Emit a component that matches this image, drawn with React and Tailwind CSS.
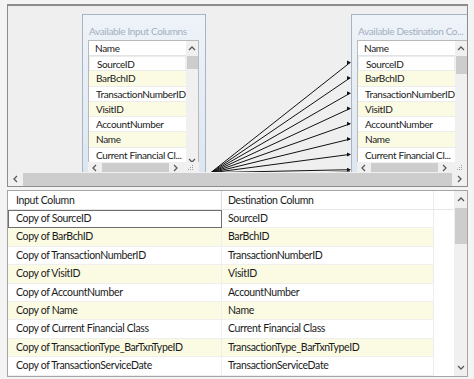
const FONT = { fontFamily: 'Lato, "Noto Sans", sans-serif', letterSpacing: "-0.35px" };

const topRows = [
  "SourceID",
  "BarBchID",
  "TransactionNumberID",
  "VisitID",
  "AccountNumber",
  "Name",
  "Current Financial Cl...",
];

const gridRows = [
  "SourceID",
  "BarBchID",
  "TransactionNumberID",
  "VisitID",
  "AccountNumber",
  "Name",
  "Current Financial Class",
  "TransactionType_BarTxnTypeID",
  "TransactionServiceDate",
];

function Chevron({ dir = "up" }) {
  const d = {
    up: "M1 5 L4 2 L7 5",
    down: "M1 2 L4 5 L7 2",
    left: "M5 1 L2 4 L5 7",
    right: "M2 1 L5 4 L2 7",
  }[dir];
  return (
    <svg width="8" height="8" viewBox="0 0 8 8">
      <path d={d} fill="none" stroke="#5a5a5a" strokeWidth="1.3" />
    </svg>
  );
}

function HScroll({ left }) {
  return (
    <div className="absolute top-[156px] w-[111px] h-[11px] bg-[#f0f0f0] flex items-center" style={{ left }}>
      <div className="w-[14px] flex justify-center"><Chevron dir="left" /></div>
      <div className="w-[67px] h-[9px] bg-[#cdcdcd]" />
      <div className="w-[14px] flex justify-center"><Chevron dir="right" /></div>
      <div className="flex-1 flex justify-center">
        <svg width="6" height="6" viewBox="0 0 6 6">
          <rect x="4" y="0" width="1" height="1" fill="#a0a0a0" />
          <rect x="2" y="2" width="1" height="1" fill="#a0a0a0" />
          <rect x="4" y="2" width="1" height="1" fill="#a0a0a0" />
          <rect x="0" y="4" width="1" height="1" fill="#a0a0a0" />
          <rect x="2" y="4" width="1" height="1" fill="#a0a0a0" />
          <rect x="4" y="4" width="1" height="1" fill="#a0a0a0" />
        </svg>
      </div>
    </div>
  );
}

function ListBox({ title, left, thumbH }) {
  return (
    <div
      className="absolute top-[8px] w-[124px] h-[200px] border border-[#a7b4c6] bg-gradient-to-b from-[#eef3f9] to-[#d9e3ee]"
      style={{ left }}
    >
      <div className="h-[25px] pl-[6px] pt-[9px] text-[10px] leading-[14px] text-[#a3aebf] whitespace-nowrap overflow-hidden">
        {title}
      </div>
      <div className="ml-[5px] mr-[6px] bg-white border border-[#b9b9b9] flex">
        <div className="flex-1 min-w-0">
          <div className="h-[15px] pl-[6px] text-[10px] leading-[15px] text-[#1a1a1a] border-b border-[#e3e3e3]">
            Name
          </div>
          {topRows.map((r, i) => (
            <div
              key={r}
              className={
                "h-[15.3px] pl-[7px] text-[10px] leading-[14px] text-[#1a1a1a] whitespace-nowrap overflow-hidden border-b border-[#ececec] " +
                (i % 2 === 1 ? "bg-[#fbfbe4] " : "bg-white ") +
                (i === 0 ? "border border-[#6b6b6b]" : "")
              }
            >
              {r}
            </div>
          ))}
          <div className="h-[40px]" />
        </div>
        <div className="w-[12px] bg-[#f0f0f0] flex flex-col items-center">
          <div className="h-[15px] flex items-center justify-center">
            <Chevron dir="up" />
          </div>
          <div className="w-[11px] bg-[#cdcdcd]" style={{ height: thumbH }} />
          <div className="h-[84px]" />
          <div className="h-[15px] flex items-center justify-center">
            <Chevron dir="down" />
          </div>
        </div>
      </div>
    </div>
  );
}

function Fan() {
  const ends = [56.6, 71.9, 87.2, 102.5, 117.8, 133.1, 148.4, 163.7];
  return (
    <svg className="absolute inset-0" width="459" height="167">
      {ends.map((y, i) => (
        <g key={i}>
          <line x1={201 + i * 0.3} y1={168 - i * 0.2} x2={342} y2={y} stroke="#111" strokeWidth="1" />
          <polygon points={`339,${y - 2} 343,${y} 339,${y + 2}`} fill="#111" />
        </g>
      ))}
      <line x1={249} y1={168} x2={342} y2={166} stroke="#111" strokeWidth="1" />
    </svg>
  );
}

export default function App() {
  return (
    <div className="w-[474px] h-[379px] bg-[#f4f4f4] overflow-hidden" style={FONT}>
      <div className="pt-[4px] pl-[7px]">
        <div className="w-[461px] h-[183px] border border-[#8c8c8c] border-t-2 flex flex-col bg-[#efefef]">
          <div className="relative flex-1 overflow-hidden">
            <ListBox title="Available Input Columns" left={74} thumbH={13} />
            <Fan />
            <ListBox title="Available Destination Co..." left={343} thumbH={18} />
            <HScroll left={80} />
            <HScroll left={349} />
          </div>
          <div className="h-[14px] flex items-center bg-[#f0f0f0]">
            <div className="w-[15px] flex justify-center"><Chevron dir="left" /></div>
            <div className="flex-1 h-[13px] bg-[#cdcdcd]" />
            <div className="w-[15px] flex justify-center"><Chevron dir="right" /></div>
          </div>
        </div>
      </div>

      <div className="mt-[3px] ml-[7px] w-[461px] h-[187px] border border-[#a5a5a5] bg-white flex">
        <div className="flex-1 min-w-0 flex flex-col">
          <div className="h-[19px] flex text-[10.5px] leading-[19px] text-[#1a1a1a] border-b border-[#e6e6e6]">
            <div className="w-[214px] pl-[8px] border-r border-[#dcdcdc]">Input Column</div>
            <div className="w-[212px] pl-[6px] border-r border-[#ececec]">Destination Column</div>
            <div className="flex-1" />
          </div>
          {gridRows.map((r, i) => (
            <div key={r} className="h-[18.4px] flex text-[10.5px] leading-[17px] text-[#1a1a1a]">
              <div
                className={
                  "w-[214px] pl-[8px] border-r border-[#dcdcdc] whitespace-nowrap " +
                  (i % 2 === 1 ? "bg-[#fbfbe4] " : "bg-white ") +
                  (i === 0 ? "outline outline-1 -outline-offset-1 outline-[#6e6e6e]" : "border-b border-[#efefef]")
                }
              >
                Copy of {r}
              </div>
              <div
                className={
                  "w-[212px] pl-[6px] border-r border-b border-r-[#ececec] border-b-[#efefef] whitespace-nowrap " +
                  (i % 2 === 1 ? "bg-[#fbfbe4]" : "bg-white")
                }
              >
                {r}
              </div>
              <div className="flex-1" />
            </div>
          ))}
        </div>
        <div className="w-[13px] bg-[#f0f0f0] flex flex-col items-center">
          <div className="h-[17px] flex items-center justify-center">
            <Chevron dir="up" />
          </div>
          <div className="w-[12px] h-[36px] bg-[#cdcdcd]" />
          <div className="flex-1" />
          <div className="h-[17px] flex items-center justify-center">
            <Chevron dir="down" />
          </div>
        </div>
      </div>
    </div>
  );
}
